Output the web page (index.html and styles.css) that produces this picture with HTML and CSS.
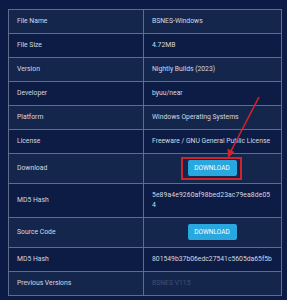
FILE: index.html
```html
<!DOCTYPE html>
<html>
<head>
<meta charset="utf-8">
<link rel="stylesheet" href="styles.css">
</head>
<body>
<div class="wrap">
<table class="info">
<tr class="light"><td>File Name</td><td>BSNES-Windows</td></tr>
<tr class="dark"><td>File Size</td><td>4.72MB</td></tr>
<tr class="light"><td>Version</td><td>Nightly Builds (2023)</td></tr>
<tr class="dark"><td>Developer</td><td>byuu/near</td></tr>
<tr class="light"><td>Platform</td><td>Windows Operating Systems</td></tr>
<tr class="dark"><td>License</td><td>Freeware / GNU General Public License</td></tr>
<tr class="light"><td>Download</td><td class="btncell"><a class="btn marked">DOWNLOAD</a></td></tr>
<tr class="dark"><td>MD5 Hash</td><td class="hash">5e89a4e9260af98bed23ac79ea8de054</td></tr>
<tr class="light"><td>Source Code</td><td class="btncell"><a class="btn">DOWNLOAD</a></td></tr>
<tr class="dark"><td>MD5 Hash</td><td>801549b37b06edc27541c5605da65f5b</td></tr>
<tr class="light"><td>Previous Versions</td><td class="dim">BSNES V115</td></tr>
</table>
<svg class="arrow" width="287" height="300" viewBox="0 0 287 300">
<line x1="259" y1="97" x2="231" y2="151" stroke="#d2232a" stroke-width="1.6"/>
<polygon points="228,158 227.5,148.5 234.5,152" fill="#d2232a"/>
</svg>
</div>
</body>
</html>
```
FILE: styles.css
```css
html, body {
  margin: 0;
  padding: 0;
  background: #0b1b45;
}
body {
  font-family: Roboto, "Liberation Sans", sans-serif;
  font-size: 6.8px;
  color: #d4d8e2;
}
.wrap {
  position: relative;
  padding: 9px 6px 6px 8px;
}
.info {
  border-collapse: collapse;
  width: 274px;
  table-layout: fixed;
}
.info td {
  border: 1px solid #5f6d8c;
  padding: 6px 9px 7px 8px;
  line-height: 10px;
  vertical-align: middle;
}
.info td:first-child {
  width: 117px;
}
.info tr.light td { background: #15264d; }
.info tr.dark td { background: #0c1c45; }
.hash {
  word-break: break-all;
  letter-spacing: 0.1px;
}
.btncell {
  text-align: center;
  font-size: 0;
}
.btn {
  position: relative;
  display: inline-block;
  width: 49px;
  height: 16px;
  line-height: 16px;
  background: #29a8e0;
  color: #ffffff;
  border-radius: 2px;
  font-size: 6.5px;
  text-align: center;
  vertical-align: top;
}
.marked::after {
  content: "";
  position: absolute;
  top: -3px;
  bottom: -4px;
  left: -7px;
  right: -5px;
  border: 2px solid #d2232a;
}
.dim { color: #3f4e72; }
.arrow {
  position: absolute;
  left: 0;
  top: 0;
  pointer-events: none;
}
```
